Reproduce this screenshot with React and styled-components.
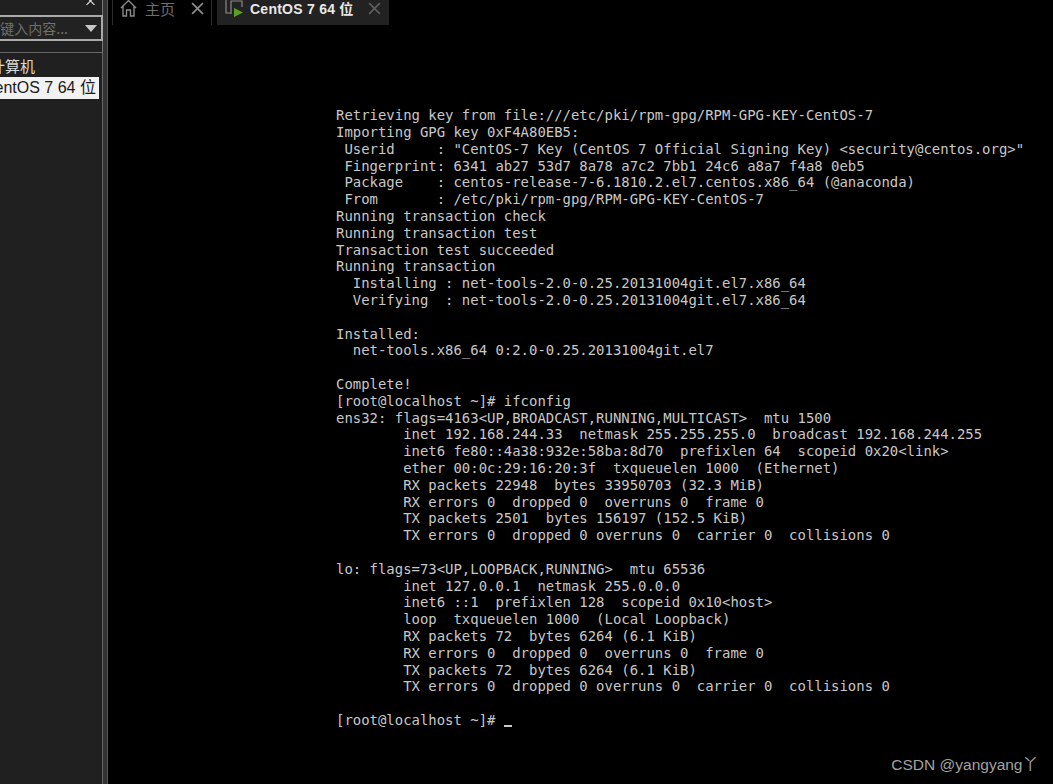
import React from "react";
import styled, { createGlobalStyle } from "styled-components";

const cjk = `"Noto Sans CJK SC", "Liberation Sans", sans-serif`;
const latin = `"Liberation Sans", "Noto Sans CJK SC", sans-serif`;

const output = `Retrieving key from file:///etc/pki/rpm-gpg/RPM-GPG-KEY-CentOS-7
Importing GPG key 0xF4A80EB5:
 Userid     : "CentOS-7 Key (CentOS 7 Official Signing Key) <security@centos.org>"
 Fingerprint: 6341 ab27 53d7 8a78 a7c2 7bb1 24c6 a8a7 f4a8 0eb5
 Package    : centos-release-7-6.1810.2.el7.centos.x86_64 (@anaconda)
 From       : /etc/pki/rpm-gpg/RPM-GPG-KEY-CentOS-7
Running transaction check
Running transaction test
Transaction test succeeded
Running transaction
  Installing : net-tools-2.0-0.25.20131004git.el7.x86_64
  Verifying  : net-tools-2.0-0.25.20131004git.el7.x86_64

Installed:
  net-tools.x86_64 0:2.0-0.25.20131004git.el7

Complete!
[root@localhost ~]# ifconfig
ens32: flags=4163<UP,BROADCAST,RUNNING,MULTICAST>  mtu 1500
        inet 192.168.244.33  netmask 255.255.255.0  broadcast 192.168.244.255
        inet6 fe80::4a38:932e:58ba:8d70  prefixlen 64  scopeid 0x20<link>
        ether 00:0c:29:16:20:3f  txqueuelen 1000  (Ethernet)
        RX packets 22948  bytes 33950703 (32.3 MiB)
        RX errors 0  dropped 0  overruns 0  frame 0
        TX packets 2501  bytes 156197 (152.5 KiB)
        TX errors 0  dropped 0 overruns 0  carrier 0  collisions 0

lo: flags=73<UP,LOOPBACK,RUNNING>  mtu 65536
        inet 127.0.0.1  netmask 255.0.0.0
        inet6 ::1  prefixlen 128  scopeid 0x10<host>
        loop  txqueuelen 1000  (Local Loopback)
        RX packets 72  bytes 6264 (6.1 KiB)
        RX errors 0  dropped 0  overruns 0  frame 0
        TX packets 72  bytes 6264 (6.1 KiB)
        TX errors 0  dropped 0 overruns 0  carrier 0  collisions 0

[root@localhost ~]# `;

const Global = createGlobalStyle`
  html, body {
    margin: 0;
    padding: 0;
    background: #000;
    overflow: hidden;
  }
`;

const Page = styled.div`
  display: flex;
  width: 1053px;
  height: 784px;
  overflow: hidden;
  background: #000;
  position: relative;
`;

const Sidebar = styled.aside`
  width: 108px;
  flex: none;
  box-sizing: border-box;
  background: #333;
  border-right: 1px solid #555;
  overflow: hidden;
`;

const SidebarInner = styled.div`
  width: 103px;
  height: 100%;
  box-sizing: border-box;
  background: #202020;
  border-right: 1px solid #777;
  display: flex;
  flex-direction: column;
  align-items: flex-end;
`;

const CloseMark = styled.div`
  height: 15px;
  width: 100%;
  flex: none;
  display: flex;
  justify-content: flex-end;
  padding-right: 7px;
  box-sizing: border-box;
`;

const SearchBox = styled.div`
  width: 160px;
  height: 26px;
  flex: none;
  box-sizing: border-box;
  border: 2px solid #aaa;
  background: #222;
  display: flex;
  align-items: center;
  justify-content: flex-end;
  padding-right: 4px;
  margin-right: -1px;
  font: 14px ${cjk};
  color: #6f6f6f;
  white-space: nowrap;
`;

const SearchText = styled.span`
  flex: none;
  margin-right: 17px;
`;

const Arrow = styled.span`
  flex: none;
  width: 0;
  height: 0;
  border-left: 6px solid transparent;
  border-right: 6px solid transparent;
  border-top: 7px solid #c8c8c8;
`;

const Tree = styled.div`
  margin-top: 11px;
  margin-right: -1px;
  width: 160px;
  flex: 1;
  box-sizing: border-box;
  border: 1px solid #666;
  border-bottom: none;
  padding: 2px 3px 0 0;
  display: flex;
  flex-direction: column;
  align-items: flex-end;
`;

const TreeRow = styled.div`
  width: 157px;
  height: 22px;
  white-space: nowrap;
  box-sizing: border-box;
  padding-left: ${(p) => p.$indent}px;
  background: ${(p) => (p.$selected ? "#f2f2f2" : "transparent")};
  color: ${(p) => (p.$selected ? "#1a1a1a" : "#d8d8d8")};
  font: ${(p) => (p.$selected ? `16px ${latin}` : `15px ${cjk}`)};
  line-height: 22px;
`;

const Main = styled.main`
  flex: 1;
  min-width: 0;
  display: flex;
  flex-direction: column;
`;

const TabBar = styled.div`
  height: 26px;
  flex: none;
  display: flex;
  padding-left: 4px;
`;

const Tab = styled.div`
  display: flex;
  align-items: center;
  height: 25px;
  box-sizing: border-box;
  padding-bottom: 9px;
  width: ${(p) => p.$width}px;
  margin-left: ${(p) => p.$gap}px;
  background: ${(p) => (p.$active ? "#222" : "transparent")};
  border-left: ${(p) => (p.$active ? "none" : "1px solid #2d2d2d")};
  border-right: ${(p) => (p.$active ? "none" : "1px solid #2d2d2d")};
`;

const TabIcon = styled.svg`
  flex: none;
  margin-left: ${(p) => p.$left}px;
`;

const TabLabel = styled.span`
  margin-left: ${(p) => p.$left}px;
  font: ${(p) => (p.$active ? `700 14px ${latin}` : `400 15px ${cjk}`)};
  letter-spacing: ${(p) => (p.$active ? "0.25px" : "0")};
  color: ${(p) => (p.$active ? "#e8e8e8" : "#6e6e6e")};
  white-space: nowrap;
`;

const TabClose = styled.svg`
  flex: none;
  margin-left: auto;
  margin-right: ${(p) => p.$right}px;
`;

const Terminal = styled.pre`
  flex: 1;
  margin: 0;
  padding: 81.3px 0 0 228px;
  font-family: "DejaVu Sans Mono", "Liberation Mono", monospace;
  font-size: 13.95px;
  line-height: 16.8px;
  color: #c8c8c8;
  overflow: hidden;
`;

const Cursor = styled.span`
  display: inline-block;
  width: 8px;
  height: 2px;
  background: #c8c8c8;
  vertical-align: -2px;
`;

const Watermark = styled.div`
  position: absolute;
  right: 15px;
  bottom: 10px;
  font: 15.5px ${latin};
  color: #a2a2a2;
  white-space: nowrap;
`;

export default function App() {
  return (
    <Page>
      <Global />
      <Sidebar>
        <SidebarInner>
          <CloseMark>
            <svg width="9" height="5" viewBox="0 0 9 5" fill="none" stroke="#d0d0d0" strokeWidth="1.2">
              <path d="M.5-3l8 8M8.500-3l-8 8" />
            </svg>
          </CloseMark>
          <SearchBox>
            <SearchText>在此处键入内容...</SearchText>
            <Arrow />
          </SearchBox>
          <Tree>
            <TreeRow $indent={18}>我的计算机</TreeRow>
            <TreeRow $indent={41} $selected>CentOS 7 64 位</TreeRow>
          </Tree>
        </SidebarInner>
      </Sidebar>
      <Main>
        <TabBar>
          <Tab $width={100} $gap={0}>
            <TabIcon $left={7} width="17" height="18" viewBox="0 0 17 18" fill="none" stroke="#8a8a8a" strokeWidth="1.4">
              <path d="M1 9l7.500-7.500L16 9M3 7.500V17h3.500v-6h4v6H14V7.500" />
            </TabIcon>
            <TabLabel $left={8}>主页</TabLabel>
            <TabClose $right={7} width="13" height="13" viewBox="0 0 12 12" fill="none" stroke="#8a8a8a" strokeWidth="1.6">
              <path d="M1 1l10 10M11 1L1 11" />
            </TabClose>
          </Tab>
          <Tab $active $width={172} $gap={5}>
            <TabIcon $left={8} width="20" height="20" viewBox="0 0 20 20" fill="none">
              <path d="M1 1v14h5M6 16V3h11v6" stroke="#8a8a8a" strokeWidth="1.2" />
              <path d="M9 10v9l9-4.500z" fill="#5da01e" />
            </TabIcon>
            <TabLabel $active $left={5}>CentOS 7 64 位</TabLabel>
            <TabClose $right={8} width="13" height="13" viewBox="0 0 12 12" fill="none" stroke="#5c5c5c" strokeWidth="1.6">
              <path d="M1 1l10 10M11 1L1 11" />
            </TabClose>
          </Tab>
        </TabBar>
        <Terminal>
          {output}
          <Cursor />
        </Terminal>
      </Main>
      <Watermark>CSDN @yangyang丫</Watermark>
    </Page>
  );
}
